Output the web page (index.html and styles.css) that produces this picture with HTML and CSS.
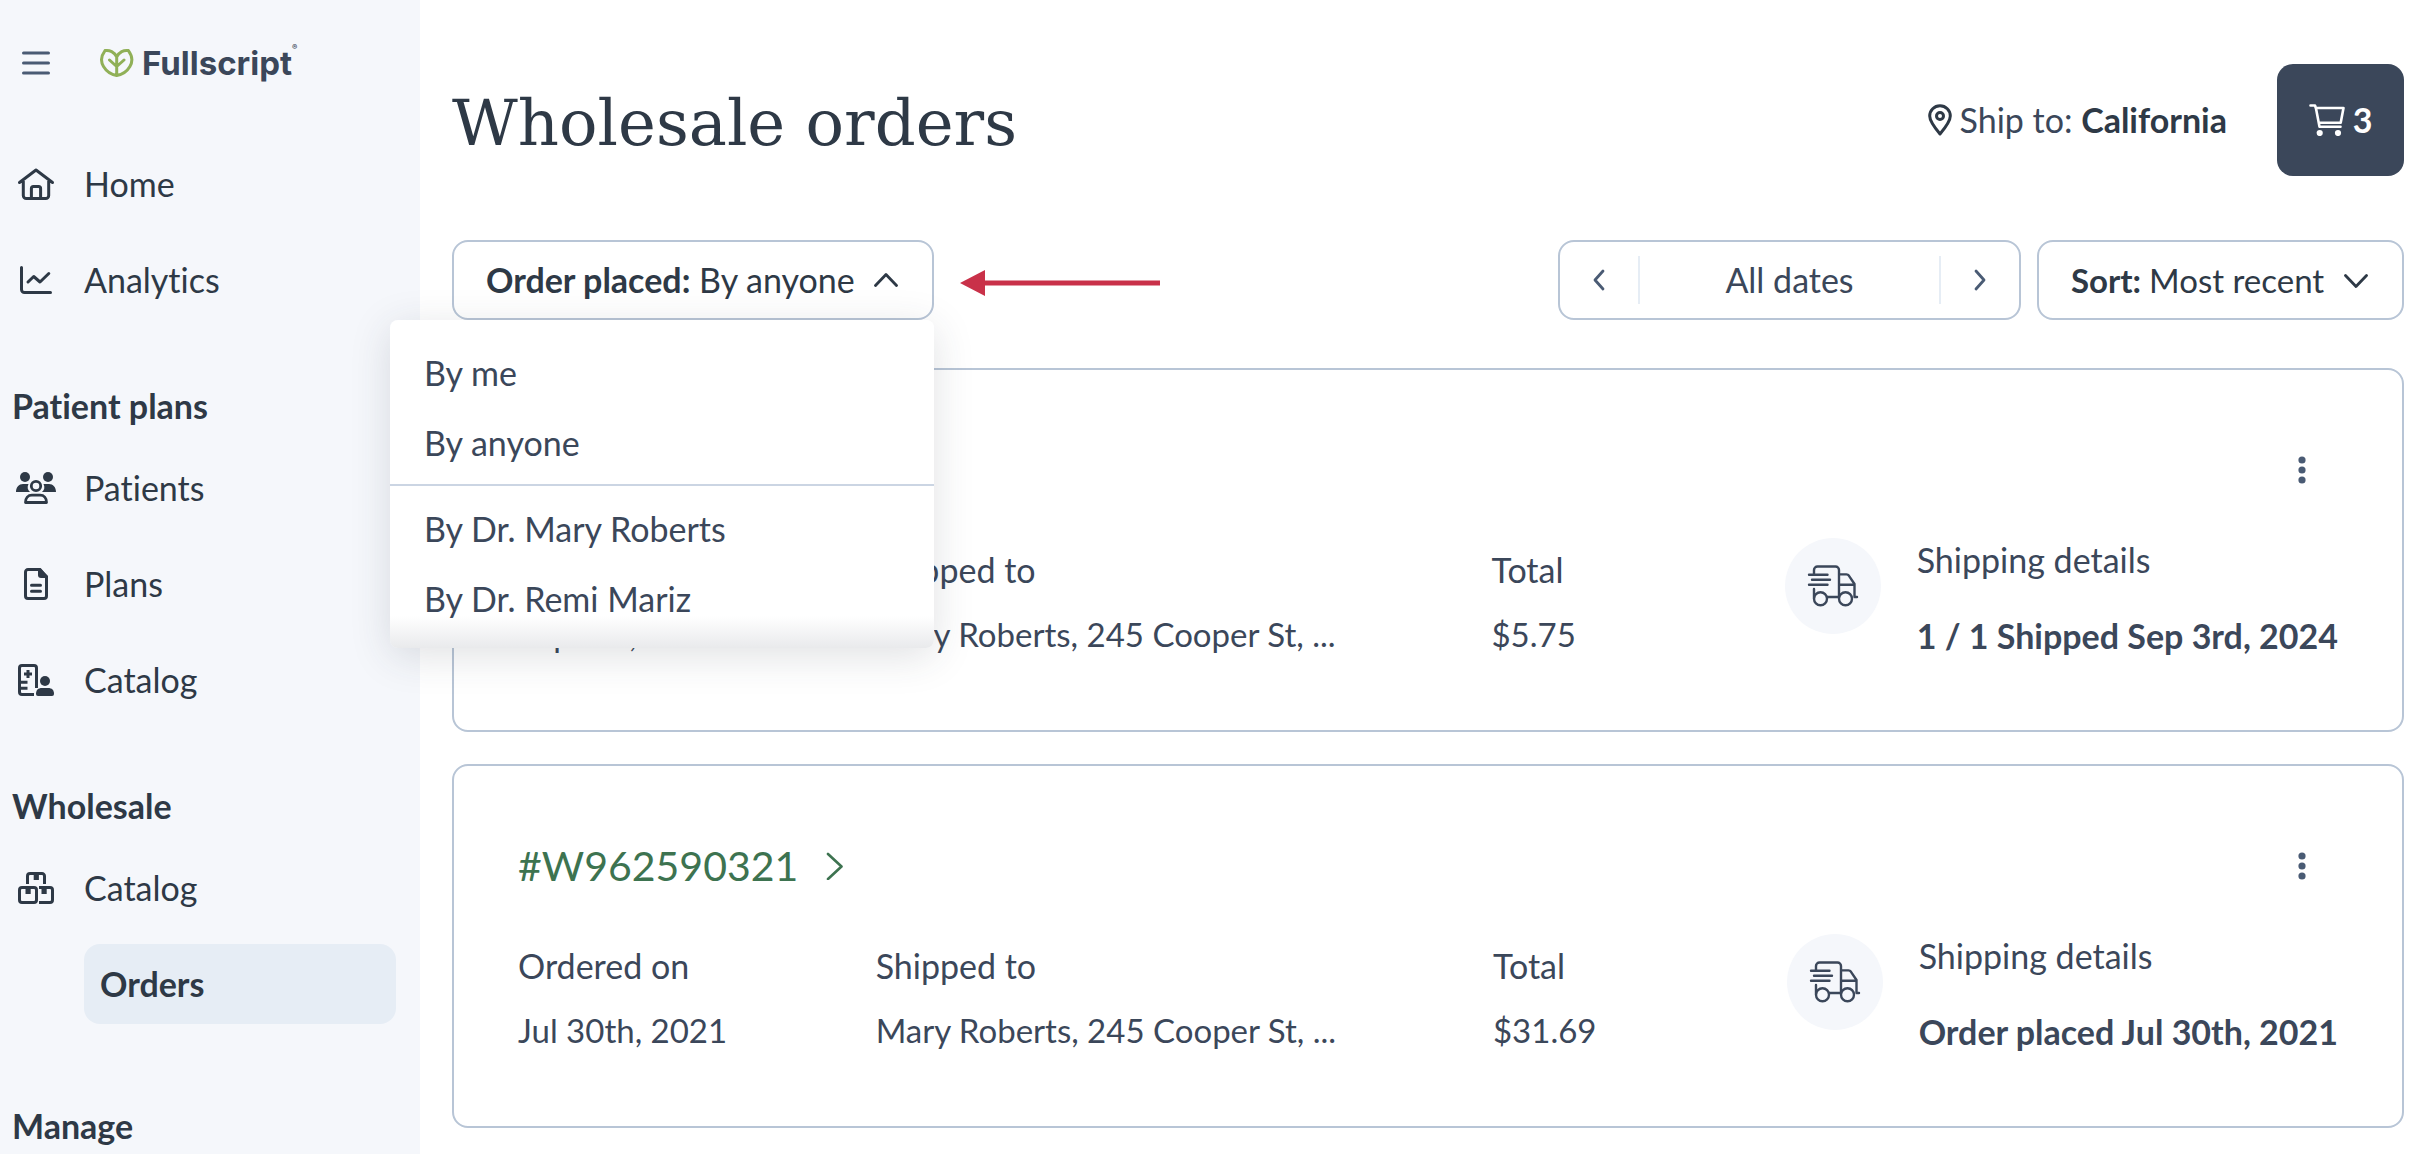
FILE: index.html
```html
<!DOCTYPE html>
<html lang="en">
<head>
<meta charset="utf-8">
<title>Wholesale orders - Fullscript</title>
<meta name="viewport" content="width=device-width, initial-scale=1">
<link rel="stylesheet" href="styles.css">
</head>
<body>
<svg class="sprite" aria-hidden="true">
  <symbol id="truck" viewBox="0 0 96 96">
    <g fill="none" stroke="currentColor" stroke-width="2.4" stroke-linecap="round" stroke-linejoin="round">
      <path d="M29 36V32a3.5 3.5 0 0 1 3.5-3.5H50.500a3.500 3.500 0 0 1 3.500 3.500V59M24 36.700H42.500M27 41.700H45M24 46.700H42.500M29 51V60M42.500 59H54M54 36.400H61.500Q63 36.400 64 37.800L69.500 46V59H72M54 46.700H69.500"/>
      <circle cx="35.500" cy="60.700" r="6.500"/><circle cx="60.500" cy="60.700" r="6.500"/>
    </g>
  </symbol>
  <symbol id="dots" viewBox="0 0 8 28">
    <g fill="currentColor"><circle cx="4" cy="4" r="3.600"/><circle cx="4" cy="14" r="3.600"/><circle cx="4" cy="24" r="3.600"/></g>
  </symbol>
</svg>

<div class="app">
  <aside class="sidebar">
    <div class="brand">
      <button class="menu-toggle" type="button" aria-label="Toggle menu">
        <svg width="28" height="24" viewBox="0 0 28 24" fill="none" stroke="currentColor" stroke-width="3" stroke-linecap="round"><path d="M1.500 2H26.500M1.500 12H26.500M1.500 22H26.500"/></svg>
      </button>
      <a class="logo" href="#">
        <svg width="34" height="30" viewBox="0 0 34 30" fill="none" stroke="currentColor" stroke-width="3" stroke-linecap="round" stroke-linejoin="round"><path d="M16.700 9C14.500 4 9.500 1.800 5 2.600C1 8 .8 14 3.500 18.500C6.500 23.500 11 26.500 16.700 27.500C22.400 26.500 27 23.500 29.900 18.500C32.600 14 32.400 8 28.400 2.600C23.900 1.800 18.900 4 16.700 9V27M9.500 12L16.700 18.500L24 12"/></svg>
        <span class="logo-name">Fullscript<sup class="logo-mark">®</sup></span>
      </a>
    </div>

    <nav class="nav">
      <ul class="nav-list">
        <li><a class="nav-link" href="#">
          <svg class="icon" viewBox="0 0 40 40" fill="none" stroke="currentColor" stroke-width="3" stroke-linecap="round" stroke-linejoin="round"><path d="M3.500 18.500L20 6L36.500 18.500M7.300 17V31.500a3 3 0 0 0 3 3H29.700a3 3 0 0 0 3-3V17M15.400 34V24.500a2 2 0 0 1 2-2H22.600a2 2 0 0 1 2 2V34"/></svg>
          Home</a></li>
        <li><a class="nav-link" href="#">
          <svg class="icon" viewBox="0 0 40 40" fill="none" stroke="currentColor" stroke-width="3" stroke-linecap="round" stroke-linejoin="round"><path d="M5.500 7.500V29.500a3 3 0 0 0 3 3H34.500M12 22L17.700 16.500L24 22L32.800 13.500"/></svg>
          Analytics</a></li>
      </ul>

      <h2 class="nav-heading">Patient plans</h2>
      <ul class="nav-list">
        <li><a class="nav-link" href="#">
          <svg class="icon" viewBox="0 0 40 40" fill="currentColor"><circle cx="9" cy="9" r="5"/><circle cx="32" cy="9" r="5"/><path d="M0 24C0 19 3 16 7 16h5.500c-1.500 3-1 6 1.500 8zM40 24c0-5-3-8-7-8h-5.500c1.500 3 1 6-1.500 8z"/><g fill="none" stroke="currentColor" stroke-width="2.800" stroke-linejoin="round"><circle cx="20" cy="18" r="4.700"/><path d="M9.500 34.500H30.500C30.500 30 28 27.200 24 27.200H16C12 27.200 9.500 30 9.500 34.500z"/></g></svg>
          Patients</a></li>
        <li><a class="nav-link" href="#">
          <svg class="icon" viewBox="0 0 40 40" fill="none" stroke="currentColor" stroke-width="3" stroke-linecap="round"><path d="M24 5.500H12a2.500 2.500 0 0 0-2.500 2.500V32a2.500 2.500 0 0 0 2.500 2.500H28a2.500 2.500 0 0 0 2.500-2.500V13L24 5.500M15.500 21.300H24.500M15.500 27.300H24.500"/><path d="M22 4h2l8 8v2H25a3 3 0 0 1-3-3z" fill="currentColor" stroke="none"/></svg>
          Plans</a></li>
        <li><a class="nav-link" href="#">
          <svg class="icon" viewBox="0 0 40 40" fill="none" stroke="currentColor" stroke-width="3"><path d="M18 34.500H6A2.500 2.500 0 0 1 3.500 32V8A2.500 2.500 0 0 1 6 5.500H18A2.500 2.500 0 0 1 20.500 8V28M12 10V18M8 14H16M3.500 22.300H11.500M3.500 28.300H11.500"/><g fill="currentColor" stroke="none"><circle cx="29" cy="21" r="5"/><path d="M20 34c0-4 2-6 6-6h6c4 0 6 2 6 6q0 2-2 2H22q-2 0-2-2z"/></g></svg>
          Catalog</a></li>
      </ul>

      <h2 class="nav-heading">Wholesale</h2>
      <ul class="nav-list">
        <li><a class="nav-link" href="#">
          <svg class="icon" viewBox="0 0 40 40" fill="none" stroke="currentColor" stroke-width="3"><path d="M11.500 16V8A2.500 2.500 0 0 1 14 5.500H26A2.500 2.500 0 0 1 28.500 8V16"/><rect x="3.500" y="19.500" width="17" height="15" rx="2.500"/><path d="M23 19.500H34A2.500 2.500 0 0 1 36.500 22V32a2.500 2.500 0 0 1-2.500 2.500H23"/><path d="M17.700 5h5.200v7h-5.200zM9.500 19h5.200v7H9.500zM25.500 19h5.200v7h-5.200z" fill="currentColor" stroke="none"/></svg>
          Catalog</a></li>
        <li class="nav-sub"><a class="nav-current" href="#" aria-current="page">Orders</a></li>
      </ul>

      <h2 class="nav-heading nav-heading-late">Manage</h2>
    </nav>
  </aside>

  <main class="main">
    <header class="page-head">
      <h1 class="title">Wholesale orders</h1>
      <div class="ship-to">
        <svg width="24" height="32" viewBox="0 0 24 32" fill="none" stroke="currentColor" stroke-width="3"><path d="M12 30C9.500 27 1.700 17.500 1.700 12A10.300 10.300 0 0 1 22.300 12C22.300 17.500 14.500 27 12 30z" stroke-linejoin="round"/><circle cx="12" cy="12" r="3.500"/></svg>
        <span>Ship to: <strong>California</strong></span>
      </div>
      <button class="cart" type="button" aria-label="Cart, 3 items">
        <svg width="36" height="32" viewBox="0 0 36 32" fill="none" stroke="currentColor" stroke-width="2.600" stroke-linecap="round" stroke-linejoin="round"><path d="M1.500 1.500H6L7 4.500L10.500 22.700H31.500M7 4H34.500L31.700 18.700H10"/><g fill="currentColor" stroke="none"><circle cx="10.700" cy="29" r="3.100"/><circle cx="29" cy="29" r="3.100"/></g></svg>
        <span>3</span>
      </button>
    </header>

    <div class="toolbar">
      <div class="placed">
        <button class="field placed-button" type="button" aria-haspopup="true" aria-expanded="true">
          <span><strong>Order placed:</strong> By anyone</span>
          <svg width="24" height="14" viewBox="0 0 24 14" fill="none" stroke="currentColor" stroke-width="2.800" stroke-linecap="round" stroke-linejoin="round"><path d="M1.500 12.500L12 1.500L22.500 12.500"/></svg>
        </button>
        <div class="menu">
          <button class="menu-item" type="button">By me</button>
          <button class="menu-item" type="button">By anyone</button>
          <hr class="menu-rule">
          <button class="menu-item" type="button">By Dr. Mary Roberts</button>
          <button class="menu-item" type="button">By Dr. Remi Mariz</button>
        </div>
      </div>
      <svg class="pointer" width="200" height="26" viewBox="0 0 200 26" aria-hidden="true"><path d="M0 13L25 0V10.500H200V15.500H25V26z" fill="currentColor"/></svg>
      <div class="field dates">
        <button class="step" type="button" aria-label="Previous dates">
          <svg width="12" height="22" viewBox="0 0 12 22" fill="none" stroke="currentColor" stroke-width="2.800" stroke-linecap="round" stroke-linejoin="round"><path d="M10 2L2 11L10 20"/></svg>
        </button>
        <button class="dates-value" type="button">All dates</button>
        <button class="step" type="button" aria-label="Next dates">
          <svg width="12" height="22" viewBox="0 0 12 22" fill="none" stroke="currentColor" stroke-width="2.800" stroke-linecap="round" stroke-linejoin="round"><path d="M2 2L10 11L2 20"/></svg>
        </button>
      </div>
      <div class="field sort">
        <label class="sort-label" for="sort">Sort:</label>
        <select class="sort-select" id="sort"><option>Most recent</option></select>
        <svg class="sort-chevron" width="24" height="14" viewBox="0 0 24 14" fill="none" stroke="currentColor" stroke-width="2.800" stroke-linecap="round" stroke-linejoin="round"><path d="M1.500 1.500L12 12.500L22.500 1.500"/></svg>
      </div>
    </div>

    <div class="orders">
      <article class="order">
        <div class="order-head">
          <button class="more" type="button" aria-label="More actions"><svg width="8" height="28"><use href="#dots"/></svg></button>
        </div>
        <div class="order-body">
          <dl class="fact"><dt>Ordered on</dt><dd>Sep 3rd, 2024</dd></dl>
          <dl class="fact"><dt>Shipped to</dt><dd>Mary Roberts, 245 Cooper St, ...</dd></dl>
          <dl class="fact"><dt>Total</dt><dd>$5.75</dd></dl>
          <div class="shipping">
            <svg class="shipping-icon" viewBox="0 0 96 96"><use href="#truck"/></svg>
            <dl class="fact fact-strong"><dt>Shipping details</dt><dd>1 / 1 Shipped Sep 3rd, 2024</dd></dl>
          </div>
        </div>
      </article>
      <article class="order">
        <div class="order-head">
          <a class="order-number" href="#">#W962590321
            <svg width="18" height="28" viewBox="0 0 18 28" fill="none" stroke="currentColor" stroke-width="2.600" stroke-linecap="round" stroke-linejoin="round"><path d="M2 2L15.500 14.500L2 27"/></svg></a>
          <button class="more" type="button" aria-label="More actions"><svg width="8" height="28"><use href="#dots"/></svg></button>
        </div>
        <div class="order-body">
          <dl class="fact"><dt>Ordered on</dt><dd>Jul 30th, 2021</dd></dl>
          <dl class="fact"><dt>Shipped to</dt><dd>Mary Roberts, 245 Cooper St, ...</dd></dl>
          <dl class="fact"><dt>Total</dt><dd>$31.69</dd></dl>
          <div class="shipping">
            <svg class="shipping-icon" viewBox="0 0 96 96"><use href="#truck"/></svg>
            <dl class="fact fact-strong"><dt>Shipping details</dt><dd>Order placed Jul 30th, 2021</dd></dl>
          </div>
        </div>
      </article>
    </div>
  </main>
</div>
</body>
</html>
```
FILE: styles.css
```css
:root {
  --ink: #2e3946;
  --slate: #3b475a;
  --muted: #4a5b74;
  --line: #b8c5d6;
  --rule: #cbd5e3;
  --tint: #f5f7fb;
}

* {
  box-sizing: border-box;
}

body {
  margin: 0;
  background: #fff;
  color: var(--ink);
  font: 34px/40px Lato, "Open Sans", sans-serif;
  font-variant-ligatures: none;
}

button,
select {
  margin: 0;
  padding: 0;
  border: 0;
  background: none;
  color: inherit;
  font: inherit;
  cursor: pointer;
}

a {
  color: inherit;
  text-decoration: none;
}

svg {
  display: block;
  flex: none;
}

h1,
h2,
ul,
dl,
dd {
  margin: 0;
  padding: 0;
}

.sprite {
  position: absolute;
  width: 0;
  height: 0;
}

.app {
  display: flex;
  min-height: 100vh;
}

/* Sidebar */

.sidebar {
  flex: none;
  width: 420px;
  padding: 40px 24px 0 12px;
  background: var(--tint);
}

.brand {
  display: flex;
  align-items: center;
  gap: 50px;
  height: 46px;
  padding-left: 10px;
  color: var(--muted);
}

.logo {
  display: flex;
  align-items: center;
  gap: 8px;
  color: #90b057;
}

.logo-name {
  color: var(--slate);
  font: 700 33px/40px Inter, sans-serif;
}

.logo-mark {
  font-size: 8px;
  line-height: 8px;
  vertical-align: top;
}

.nav {
  padding-top: 58px;
}

.nav-list {
  display: grid;
  gap: 16px;
  list-style: none;
}

.nav-link {
  display: flex;
  align-items: center;
  gap: 28px;
  height: 80px;
  padding-left: 4px;
}

.icon {
  width: 40px;
  height: 40px;
}

.nav-heading {
  margin: 66px 0 22px;
  font-size: 34px;
  line-height: 40px;
}

.nav-heading-late {
  margin-top: 82px;
  margin-bottom: 0;
}

.nav-sub {
  padding-left: 72px;
}

.nav-current {
  display: flex;
  align-items: center;
  height: 80px;
  padding-left: 16px;
  border-radius: 16px;
  background: #e6edf5;
  font-weight: 700;
}

/* Page header */

.main {
  flex: 1;
  min-width: 0;
  padding: 64px 24px 24px 32px;
}

.page-head {
  display: flex;
  align-items: center;
  height: 112px;
}

.title {
  flex: 1;
  padding-top: 6px;
  font: 400 64px/80px "DejaVu Serif", serif;
}

.ship-to {
  display: flex;
  align-items: center;
  gap: 8px;
  margin-right: 50px;
}

.ship-to span {
  color: var(--slate);
}

.ship-to strong {
  color: var(--ink);
}

.cart {
  display: flex;
  align-items: center;
  justify-content: center;
  gap: 8px;
  width: 127px;
  height: 112px;
  border-radius: 16px;
  background: var(--slate);
  color: #fff;
  font-weight: 700;
}

/* Filters */

.toolbar {
  display: flex;
  align-items: center;
  margin: 64px 0 48px;
}

.field {
  display: flex;
  align-items: center;
  height: 80px;
  border: 2px solid var(--line);
  border-radius: 16px;
  background: #fff;
}

.placed {
  position: relative;
}

.placed-button {
  justify-content: space-between;
  width: 482px;
  padding: 0 34px 0 32px;
}

.menu {
  position: absolute;
  z-index: 1;
  top: 100%;
  right: 0;
  display: flex;
  flex-direction: column;
  width: 544px;
  padding: 18px 0 14px;
  border-radius: 8px;
  background: linear-gradient(to top, #e9eaec, #fff 32px);
  box-shadow: 0 8px 40px rgba(46, 57, 70, 0.15);
}

.menu-item {
  height: 70px;
  padding: 0 34px;
  color: var(--slate);
  text-align: left;
}

.menu-rule {
  width: 100%;
  height: 2px;
  margin: 6px 0 8px;
  border: 0;
  background: var(--rule);
}

.pointer {
  margin: 6px auto 0 26px;
  color: #c93149;
}

.dates {
  width: 463px;
  margin-right: 16px;
  color: var(--muted);
}

.step {
  display: flex;
  align-items: center;
  justify-content: center;
  width: 78px;
  height: 48px;
}

.dates-value {
  flex: 1;
  height: 48px;
  border: 2px solid #e6edf5;
  border-width: 0 2px;
  color: var(--slate);
}

.sort {
  position: relative;
  width: 367px;
  padding-left: 32px;
  gap: 8px;
  font-size: 33px;
}

.sort-label {
  font-weight: 700;
}

.sort-select {
  flex: 1;
  appearance: none;
  height: 76px;
}

.sort-chevron {
  position: absolute;
  top: 32px;
  right: 34px;
  pointer-events: none;
}

/* Orders */

.orders {
  display: grid;
  gap: 32px;
}

.order {
  padding: 76px 64px 74px;
  border: 2px solid var(--line);
  border-radius: 16px;
  color: var(--slate);
}

.order-head {
  display: flex;
  align-items: center;
  height: 48px;
}

.order-number {
  display: flex;
  align-items: center;
  gap: 28px;
  color: #3d7350;
  font-size: 41px;
  line-height: 48px;
}

.more {
  margin-left: auto;
  padding: 10px 32px;
  color: var(--muted);
}

.order-body {
  display: grid;
  grid-template-columns: 358fr 618fr 294fr 550fr;
  align-items: start;
  margin-top: 44px;
}

.fact {
  display: grid;
  gap: 24px;
  padding-top: 12px;
  white-space: nowrap;
}

.fact dd {
  font-size: 33px;
}

.shipping {
  display: flex;
  align-items: flex-start;
  gap: 36px;
}

.shipping-icon {
  width: 96px;
  height: 96px;
  border-radius: 50%;
  background: var(--tint);
}

.fact-strong {
  gap: 36px;
  padding-top: 2px;
}

.fact-strong dd {
  font-size: 34px;
  font-weight: 700;
}
```
